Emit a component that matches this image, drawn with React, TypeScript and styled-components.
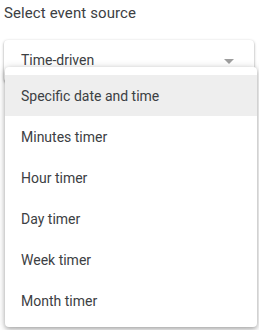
import React from "react";
import styled, { createGlobalStyle } from "styled-components";

const Global = createGlobalStyle`
  html, body { margin: 0; padding: 0; background: #ffffff; }
  body { font-family: Roboto, "Noto Sans", Arial, sans-serif; }
`;

const Page = styled.div`
  width: 259px;
  height: 330px;
  box-sizing: border-box;
  padding: 3px 0 0 4px;
  overflow: hidden;
  position: relative;
`;

const Title = styled.div`
  font-size: 15px;
  line-height: 20px;
  color: #3c4043;
  letter-spacing: 0.1px;
`;

const SelectWrap = styled.div`
  position: relative;
  margin-top: 17px;
  width: 250px;
`;

const SelectBox = styled.div`
  height: 42px;
  border-radius: 4px;
  background: #fff;
  box-shadow: 0 1px 3px rgba(0, 0, 0, 0.3), 0 1px 2px rgba(0, 0, 0, 0.15);
  display: flex;
  align-items: center;
  padding: 0 20px 0 17px;
  justify-content: space-between;
  box-sizing: border-box;
`;

const SelectText = styled.span`
  font-size: 14px;
  color: #3c4043;
  margin-top: -2px;
`;

const Arrow = styled.span`
  width: 0;
  height: 0;
  border-left: 5px solid transparent;
  border-right: 5px solid transparent;
  border-top: 5px solid #9e9e9e;
`;

const Menu = styled.ul`
  position: absolute;
  top: 27px;
  left: 1px;
  width: 252px;
  margin: 0;
  padding: 8px 0 6px;
  list-style: none;
  background: #fff;
  border-radius: 4px;
  box-shadow: 0 2px 4px rgba(0, 0, 0, 0.25), 0 1px 8px rgba(0, 0, 0, 0.18);
  box-sizing: border-box;
`;

const Item = styled.li<{ $active?: boolean }>`
  height: 41px;
  display: flex;
  align-items: center;
  padding-left: 16px;
  font-size: 14px;
  color: #3c4043;
  background: ${(p) => (p.$active ? "#eeeeee" : "transparent")};
`;

const items = [
  "Specific date and time",
  "Minutes timer",
  "Hour timer",
  "Day timer",
  "Week timer",
  "Month timer",
];

export default function App() {
  return (
    <>
      <Global />
      <Page>
        <Title>Select event source</Title>
        <SelectWrap>
          <SelectBox>
            <SelectText>Time-driven</SelectText>
            <Arrow />
          </SelectBox>
          <Menu>
            {items.map((t, i) => (
              <Item key={t} $active={i === 0}>
                {t}
              </Item>
            ))}
          </Menu>
        </SelectWrap>
      </Page>
    </>
  );
}
